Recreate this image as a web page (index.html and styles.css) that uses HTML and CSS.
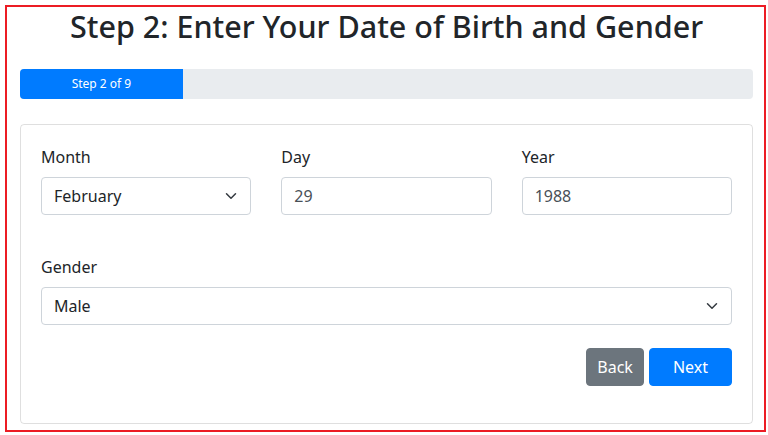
FILE: index.html
```html
<!DOCTYPE html>
<html lang="en">
<head>
<meta charset="utf-8">
<title>Step 2</title>
<link rel="stylesheet" href="styles.css">
</head>
<body>
<div class="frame">
  <h2 class="title">Step 2: Enter Your Date of Birth and Gender</h2>
  <div class="progress">
    <div class="progress-bar" style="width: 22.22%">Step 2 of 9</div>
  </div>
  <div class="card">
    <div class="dob-row">
      <div class="field">
        <label class="label" for="month">Month</label>
        <div class="select-wrap">
          <select id="month" class="control select">
            <option>February</option>
          </select>
          <svg class="chevron" viewBox="0 0 16 16" width="16" height="12"><path d="M2 5l6 6 6-6" fill="none" stroke="#343a40" stroke-width="2" stroke-linecap="round" stroke-linejoin="round"/></svg>
        </div>
      </div>
      <div class="field">
        <label class="label" for="day">Day</label>
        <input id="day" class="control" type="text" value="29">
      </div>
      <div class="field">
        <label class="label" for="year">Year</label>
        <input id="year" class="control" type="text" value="1988">
      </div>
    </div>
    <div class="field gender">
      <label class="label" for="gender">Gender</label>
      <div class="select-wrap">
        <select id="gender" class="control select">
          <option>Male</option>
        </select>
        <svg class="chevron" viewBox="0 0 16 16" width="16" height="12"><path d="M2 5l6 6 6-6" fill="none" stroke="#343a40" stroke-width="2" stroke-linecap="round" stroke-linejoin="round"/></svg>
      </div>
    </div>
    <div class="actions">
      <button class="btn btn-back" type="button">Back</button>
      <button class="btn btn-next" type="button">Next</button>
    </div>
  </div>
</div>
</body>
</html>
```
FILE: styles.css
```css
html, body {
  margin: 0;
  padding: 0;
  background: #fff;
}
body {
  font-family: "Noto Sans", "Open Sans", "Liberation Sans", sans-serif;
  color: #212529;
  font-size: 16px;
  line-height: 1.5;
}
.frame {
  margin: 5px 0 0 5px;
  height: 423px;
  border: 2px solid #ec1c24;
  padding: 0 11px 0 13px;
  box-sizing: content-box;
  width: 733px;
}
.title {
  margin: 0;
  font-size: 30.5px;
  font-weight: 500;
  line-height: 38px;
  text-align: center;
  color: #212529;
}
.progress {
  margin-top: 24px;
  height: 30px;
  background: #e9ecef;
  border-radius: 4px;
  overflow: hidden;
  display: flex;
}
.progress-bar {
  background: #007bff;
  color: #fff;
  font-size: 12px;
  display: flex;
  align-items: center;
  justify-content: center;
}
.card {
  margin-top: 25px;
  border: 1px solid rgba(0,0,0,.125);
  border-radius: 4px;
  padding: 20px 20px 37px;
}
.dob-row {
  display: grid;
  grid-template-columns: repeat(3, 1fr);
  column-gap: 30px;
  margin-bottom: 40px;
}
.field {
  display: flex;
  flex-direction: column;
}
.label {
  display: block;
  margin-bottom: 8px;
  line-height: 24px;
}
.control {
  box-sizing: border-box;
  height: 38px;
  width: 100%;
  padding: 6px 12px;
  font-family: inherit;
  font-size: 16px;
  line-height: 24px;
  color: #495057;
  background: #fff;
  border: 1px solid #ced4da;
  border-radius: 4px;
  margin: 0;
  outline: none;
}
.select {
  appearance: none;
  -webkit-appearance: none;
  padding-right: 36px;
  color: #212529;
}
.select-wrap {
  position: relative;
}
.chevron {
  position: absolute;
  right: 12px;
  top: 13px;
  pointer-events: none;
}
.actions {
  display: flex;
  justify-content: flex-end;
  gap: 5px;
  margin-top: 23px;
}
.btn {
  height: 38px;
  border: 1px solid transparent;
  border-radius: 4px;
  font-family: inherit;
  font-size: 16px;
  line-height: 24px;
  color: #fff;
  cursor: pointer;
}
.btn-back {
  background: #6c757d;
  border-color: #6c757d;
  padding: 6px 10px;
}
.btn-next {
  background: #007bff;
  border-color: #007bff;
  padding: 6px 23px;
}
```
